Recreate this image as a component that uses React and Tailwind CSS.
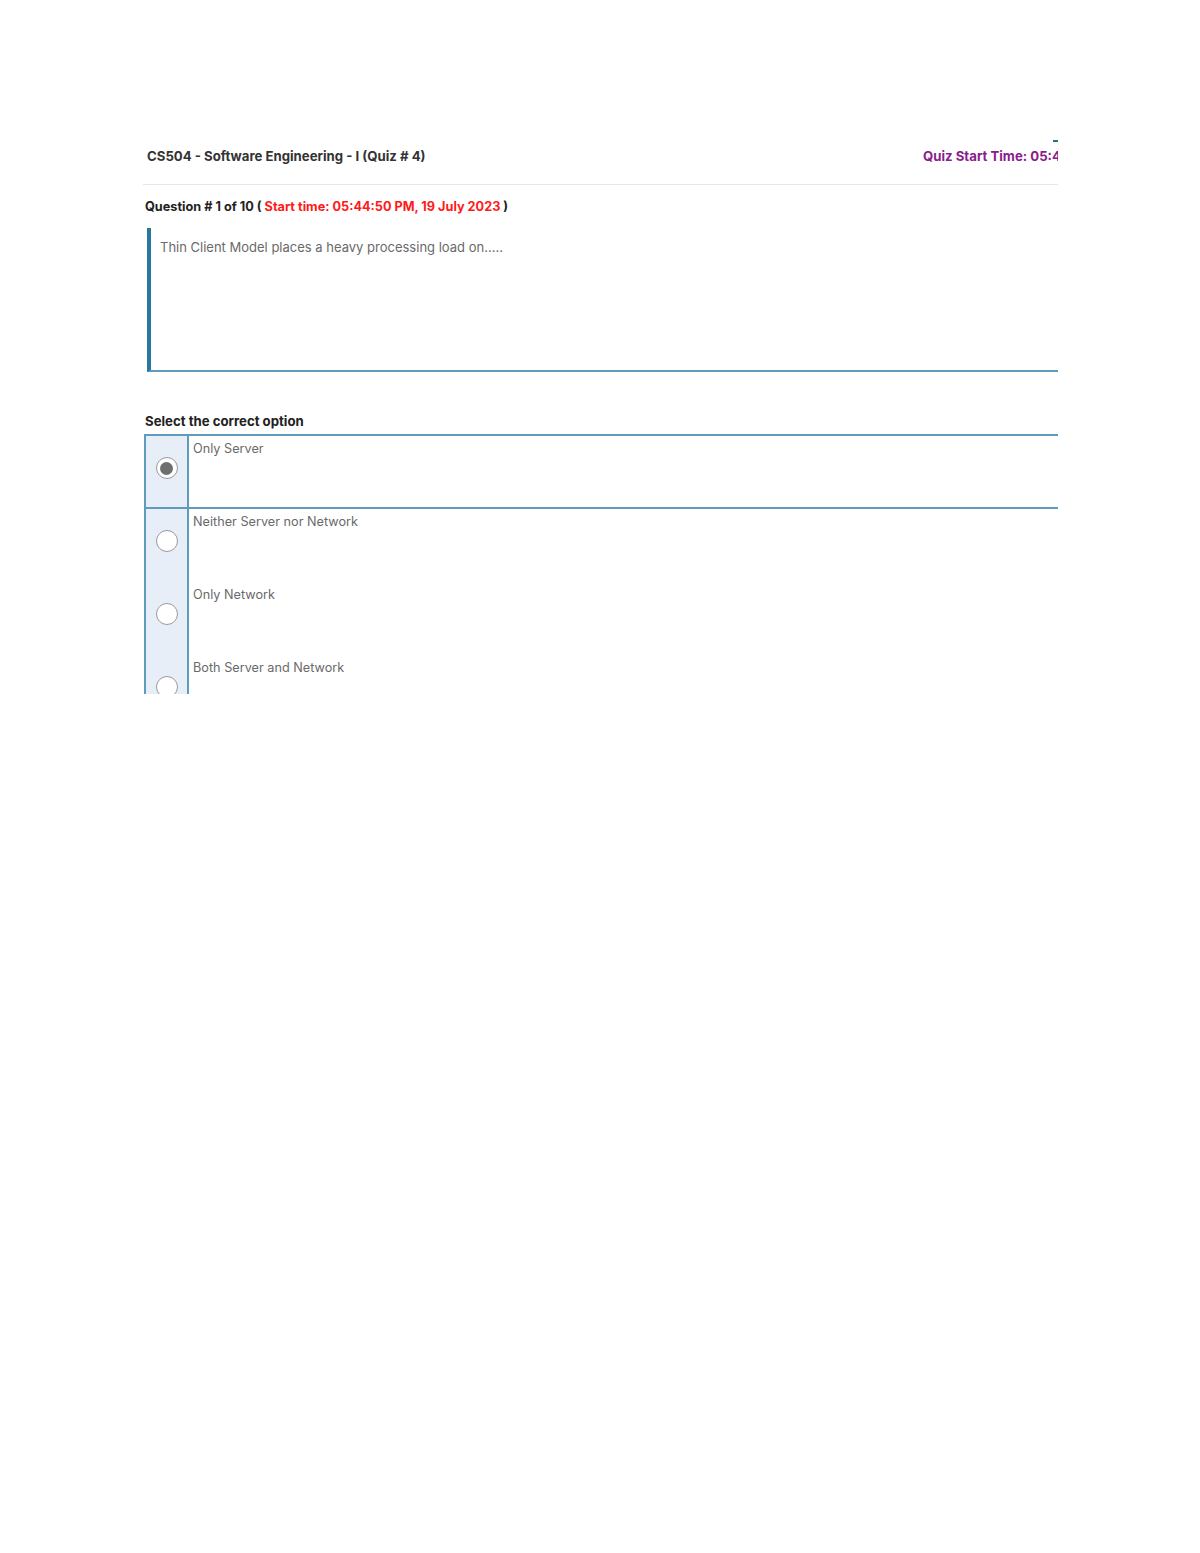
import React from 'react';

const options = [
  { label: 'Only Server', checked: true },
  { label: 'Neither Server nor Network' },
  { label: 'Only Network' },
  { label: 'Both Server and Network' },
];

function Radio({ checked }) {
  return (
    <span className="flex items-center justify-center w-[22px] h-[22px] rounded-full border border-[#9a9a9a] bg-white">
      {checked && <span className="w-[13px] h-[13px] rounded-full bg-[#6f6f6f]" />}
    </span>
  );
}

export default function App() {
  return (
    <div className="w-[1200px] min-h-[1553px] bg-white font-['Inter',sans-serif] text-[#222]">
      <div className="ml-[143px] w-[915px] h-[694px] pt-[140px] overflow-hidden">
        {/* tiny marker at the right */}
        <div className="flex justify-end">
          <div className="w-[5px] h-[2px] bg-[#2e6f80]" />
        </div>

        {/* Header */}
        <div className="flex items-center h-[28px] mt-[1px]">
          <span className="ml-[4px] text-[13.2px] font-bold text-[#333]">
            CS504 - Software Engineering - I (Quiz # 4)
          </span>
          <span className="ml-auto w-[135px] overflow-hidden whitespace-nowrap text-[13.2px] font-bold text-[#8a1c8c]">
            Quiz Start Time: 05:44:50 PM
          </span>
        </div>
        <div className="mt-[13px] border-t border-[#e6e6e6]" />

        {/* Question line */}
        <div className="mt-[14px] ml-[2px] text-[12.7px] font-bold text-[#222] leading-[16px]">
          Question # 1 of 10 ({' '}
          <span className="text-[#ff1a1a]">Start time: 05:44:50 PM, 19 July 2023</span> )
        </div>

        {/* Question box */}
        <div className="mt-[13px] ml-[4px] h-[144px] border-l-4 border-l-[#27789a] border-b-2 border-b-[#5f9cbc] pl-[9px] pt-[11px]">
          <p className="text-[13px] text-[#6a6a6a] leading-[16px]">
            Thin Client Model places a heavy processing load on.....
          </p>
        </div>

        {/* Options */}
        <div className="mt-[41px] ml-[2px] text-[13.2px] font-bold text-[#222] leading-[16px]">
          Select the correct option
        </div>
        <div className="mt-[5px] ml-[1px] border-t-2 border-[#5f9cbc]">
          {options.map((o, i) => (
            <div
              key={o.label}
              className={`flex h-[73px] ${i === 0 ? 'border-b-2 border-[#5f9cbc]' : ''}`}
            >
              <div className="w-[45px] shrink-0 bg-[#e7eef8] border-l-2 border-r-2 border-[#5f9cbc] flex items-start justify-center pt-[21px]">
                <Radio checked={o.checked} />
              </div>
              <div className="pl-[4px] pt-[5px] text-[12.7px] text-[#6a6a6a] leading-[16px]">
                {o.label}
              </div>
            </div>
          ))}
        </div>
      </div>
    </div>
  );
}
